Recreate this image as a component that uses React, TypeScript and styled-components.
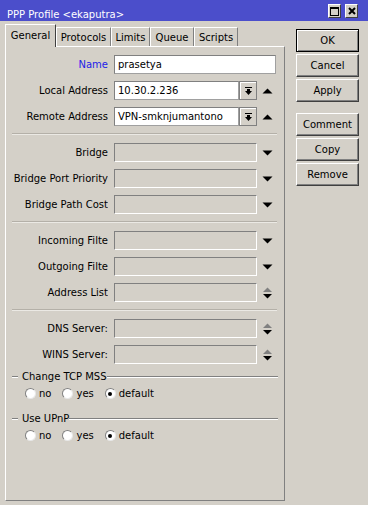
import React from 'react';
import styled, { createGlobalStyle, css } from 'styled-components';

const GlobalStyle = createGlobalStyle`
  html, body {
    margin: 0;
    padding: 0;
    background: #d4d0c8;
  }
  body {
    font-family: "DejaVu Sans", Verdana, sans-serif;
    font-size: 10px;
    color: #000;
  }
`;

const Window = styled.div`
  width: 368px;
  height: 505px;
  background: #d4d0c8;
  display: flex;
  flex-direction: column;
  overflow: hidden;
`;

const TitleBar = styled.div`
  height: 21px;
  flex: none;
  box-sizing: border-box;
  background: #4b4ecb;
  color: #fff;
  display: flex;
  align-items: flex-start;
  padding: 0 10px 0 7px;
`;

const Title = styled.div`
  flex: 1;
  margin-top: 9px;
  line-height: 12px;
  white-space: nowrap;
`;

const TitleButtons = styled.div`
  display: flex;
  gap: 4px;
  margin-top: 4px;
`;

const TitleButton = styled.div`
  width: 13px;
  height: 14px;
  box-sizing: border-box;
  background: #d4d0c8;
  border: 1px solid;
  border-color: #fff #404040 #404040 #fff;
  display: flex;
  align-items: center;
  justify-content: center;
`;

const Body = styled.div`
  flex: 1;
  min-height: 0;
  display: flex;
  padding: 3px 0 4px 5px;
`;

const LeftCol = styled.div`
  width: 280px;
  display: flex;
  flex-direction: column;
`;

const TabStrip = styled.div`
  height: 22px;
  display: flex;
  align-items: flex-end;
  position: relative;
  z-index: 1;
`;

const Tab = styled.div<{ $active?: boolean; $w: number }>`
  width: ${p => p.$w}px;
  height: 19px;
  box-sizing: border-box;
  background: #d4d0c8;
  border: 1px solid;
  border-bottom: none;
  border-color: #fff #808080 transparent #fff;
  display: flex;
  justify-content: center;
  padding-top: 4px;
  line-height: 12px;
  white-space: nowrap;
  ${p => p.$active && css`
    height: 23px;
    margin-bottom: -1px;
    padding-top: 5px;
    border-right-color: #404040;
  `}
`;

const Panel = styled.div`
  flex: 1;
  border: 1px solid;
  border-color: #fff #808080 #808080 #fff;
  display: flex;
  flex-direction: column;
  padding-top: 8px;
`;

const Section = styled.div`
  display: flex;
  flex-direction: column;
  gap: 7px;
`;

const Divider = styled.div`
  height: 1px;
  margin: 7px 7px 8px 6px;
  background: #b4b0a8;
  border-bottom: 1px solid #ebe9e4;
`;

const Row = styled.div`
  display: grid;
  grid-template-columns: 95px 1fr;
  column-gap: 6px;
  height: 19px;
  padding: 0 8px 0 7px;
`;

const Label = styled.div<{ $accent?: boolean }>`
  text-align: right;
  line-height: 19px;
  white-space: nowrap;
  overflow: hidden;
  color: ${p => (p.$accent ? '#2222e8' : '#000')};
`;

const Field = styled.div`
  display: flex;
  height: 19px;
`;

const TextBox = styled.div`
  flex: 1;
  box-sizing: border-box;
  background: #fff;
  border: 1px solid;
  border-color: #808080 #a0a0a0 #a0a0a0 #808080;
  padding: 0 3px;
  line-height: 17px;
  white-space: nowrap;
  overflow: hidden;
`;

const EmptyBox = styled.div`
  flex: 1;
  box-sizing: border-box;
  background: #d4d0c8;
  border: 1px solid;
  border-color: #808080 #fff #fff #808080;
`;

const DropButton = styled.div`
  width: 18px;
  flex: none;
  box-sizing: border-box;
  background: #d4d0c8;
  border: 1px solid #808080;
  box-shadow: inset 1px 1px #fff;
  display: flex;
  align-items: center;
  justify-content: center;
`;

const Trailing = styled.div`
  width: 18px;
  flex: none;
  display: flex;
  align-items: center;
  justify-content: center;
  padding-left: 1px;
`;

const GroupTitle = styled.div<{ $gap: number }>`
  display: flex;
  align-items: center;
  margin-top: ${p => p.$gap}px;
  padding: 0 6px;
  height: 12px;
  line-height: 12px;
  &::before {
    content: '';
    width: 6px;
    height: 1px;
    background: #808080;
    border-bottom: 1px solid #fff;
    margin-right: 4px;
  }
  &::after {
    content: '';
    flex: 1;
    height: 1px;
    background: #808080;
    border-bottom: 1px solid #fff;
  }
`;

const RadioRow = styled.div`
  display: flex;
  align-items: center;
  gap: 11px;
  height: 13px;
  margin-top: 4px;
  padding-left: 19px;
`;

const RadioItem = styled.label`
  display: flex;
  align-items: center;
  gap: 3px;
  line-height: 12px;
`;

const RadioDot = styled.span<{ $checked?: boolean }>`
  width: 11px;
  height: 11px;
  box-sizing: border-box;
  border-radius: 50%;
  background: #fff;
  border: 1px solid;
  border-color: #808080 #e8e8e8 #e8e8e8 #808080;
  display: flex;
  align-items: center;
  justify-content: center;
  &::after {
    content: '';
    width: 4px;
    height: 4px;
    border-radius: 50%;
    background: ${p => (p.$checked ? '#000' : 'transparent')};
  }
`;

const ButtonCol = styled.div`
  width: 63px;
  margin-left: 11px;
  padding-top: 5px;
  display: flex;
  flex-direction: column;
  gap: 2px;
`;

const Button = styled.div<{ $default?: boolean; $spaced?: boolean }>`
  height: 23px;
  box-sizing: border-box;
  border: 1px solid;
  border-color: #fff #404040 #404040 #fff;
  box-shadow: inset -1px -1px #808080;
  display: flex;
  align-items: center;
  justify-content: center;
  line-height: 12px;
  ${p => p.$default && css`
    border-color: #000;
    box-shadow: inset 1px 1px #fff, inset -1px -1px #808080;
  `}
  ${p => p.$spaced && css`margin-top: 9px;`}
`;

const ComboIcon = () => (
  <svg width="9" height="10" viewBox="0 0 9 10">
    <rect x="1" y="1" width="7" height="1" fill="#000" />
    <rect x="3" y="3" width="3" height="2" fill="#000" />
    <path d="M1 5h7l-3.5 4z" fill="#000" />
  </svg>
);

const UpIcon = () => (
  <svg width="11" height="6" viewBox="0 0 11 6">
    <path d="M0.5 5.5h10l-5-5z" fill="#000" />
  </svg>
);

const DownIcon = () => (
  <svg width="11" height="6" viewBox="0 0 11 6">
    <path d="M0.5 0.5h10l-5 5z" fill="#000" />
  </svg>
);

const SpinIcon = () => (
  <svg width="11" height="12" viewBox="0 0 11 12">
    <path d="M1 5h9l-4.5-4.5z" fill="#808080" />
    <path d="M1 7h9l-4.5 4.5z" fill="#000" />
  </svg>
);

const MaxIcon = () => (
  <svg width="9" height="9" viewBox="0 0 9 9">
    <rect x="0.5" y="0.5" width="8" height="8" fill="none" stroke="#000" />
    <rect x="0" y="0" width="9" height="2" fill="#000" />
  </svg>
);

const CloseIcon = () => (
  <svg width="8" height="8" viewBox="0 0 8 8">
    <path d="M1 1l6 6M7 1l-6 6" stroke="#000" strokeWidth="2" />
  </svg>
);

type Kind = 'text' | 'combo' | 'select' | 'spin';

interface FieldRowProps {
  label: string;
  kind: Kind;
  value?: string;
  accent?: boolean;
}

const FieldRow: React.FC<FieldRowProps> = ({ label, kind, value, accent }) => (
  <Row>
    <Label $accent={accent}>{label}</Label>
    <Field>
      {kind === 'text' && <TextBox>{value}</TextBox>}
      {kind === 'combo' && (
        <>
          <TextBox>{value}</TextBox>
          <DropButton><ComboIcon /></DropButton>
          <Trailing><UpIcon /></Trailing>
        </>
      )}
      {kind === 'select' && (
        <>
          <EmptyBox />
          <Trailing><DownIcon /></Trailing>
        </>
      )}
      {kind === 'spin' && (
        <>
          <EmptyBox />
          <Trailing><SpinIcon /></Trailing>
        </>
      )}
    </Field>
  </Row>
);

const tabs = [
  { label: 'General', w: 51 },
  { label: 'Protocols', w: 55 },
  { label: 'Limits', w: 39 },
  { label: 'Queue', w: 44 },
  { label: 'Scripts', w: 44 },
];

const sections: FieldRowProps[][] = [
  [
    { label: 'Name', kind: 'text', value: 'prasetya', accent: true },
    { label: 'Local Address', kind: 'combo', value: '10.30.2.236' },
    { label: 'Remote Address', kind: 'combo', value: 'VPN-smknjumantono' },
  ],
  [
    { label: 'Bridge', kind: 'select' },
    { label: 'Bridge Port Priority', kind: 'select' },
    { label: 'Bridge Path Cost', kind: 'select' },
  ],
  [
    { label: 'Incoming Filte', kind: 'select' },
    { label: 'Outgoing Filte', kind: 'select' },
    { label: 'Address List', kind: 'spin' },
  ],
  [
    { label: 'DNS Server:', kind: 'spin' },
    { label: 'WINS Server:', kind: 'spin' },
  ],
];

const RadioGroup: React.FC<{ title: string; gap: number }> = ({ title, gap }) => (
  <>
    <GroupTitle $gap={gap}>{title}</GroupTitle>
    <RadioRow>
      <RadioItem><RadioDot />no</RadioItem>
      <RadioItem><RadioDot />yes</RadioItem>
      <RadioItem><RadioDot $checked />default</RadioItem>
    </RadioRow>
  </>
);

const App: React.FC = () => (
  <>
    <GlobalStyle />
    <Window>
      <TitleBar>
        <Title>PPP Profile &lt;ekaputra&gt;</Title>
        <TitleButtons>
          <TitleButton><MaxIcon /></TitleButton>
          <TitleButton><CloseIcon /></TitleButton>
        </TitleButtons>
      </TitleBar>
      <Body>
        <LeftCol>
          <TabStrip>
            {tabs.map((t, i) => (
              <Tab key={t.label} $w={t.w} $active={i === 0}>{t.label}</Tab>
            ))}
          </TabStrip>
          <Panel>
            {sections.map((rows, i) => (
              <React.Fragment key={i}>
                {i > 0 && <Divider />}
                <Section>
                  {rows.map(r => <FieldRow key={r.label} {...r} />)}
                </Section>
              </React.Fragment>
            ))}
            <RadioGroup title="Change TCP MSS" gap={7} />
            <RadioGroup title="Use UPnP" gap={13} />
          </Panel>
        </LeftCol>
        <ButtonCol>
          <Button $default>OK</Button>
          <Button>Cancel</Button>
          <Button>Apply</Button>
          <Button $spaced>Comment</Button>
          <Button>Copy</Button>
          <Button>Remove</Button>
        </ButtonCol>
      </Body>
    </Window>
  </>
);

export default App;
